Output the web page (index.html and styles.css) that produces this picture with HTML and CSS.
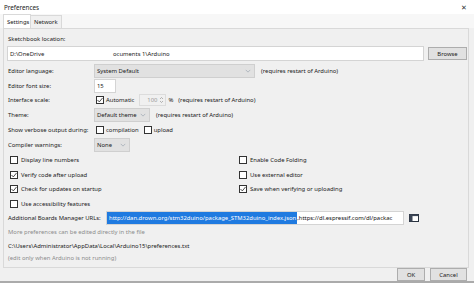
FILE: index.html
```html
<!DOCTYPE html>
<html>
<head>
<meta charset="utf-8">
<link rel="stylesheet" href="styles.css">
</head>
<body>
<div class="win">
  <div class="titlebar"><span class="title">Preferences</span><span class="close">✕</span></div>
  <div class="tabs">
    <div class="tab active">Settings</div>
    <div class="tab">Network</div>
  </div>
  <div class="panel">
    <div class="lbl-row">Sketchbook location:</div>
    <div class="sk-row">
      <div class="field sk"><span class="sk-a">D:\OneDrive</span><span class="sk-b">ocuments 1\Arduino</span></div>
      <div class="btn browse">Browse</div>
    </div>
    <div class="row first">
      <div class="label">Editor language:</div>
      <div class="combo lang"><span>System Default</span><svg class="chev" viewBox="0 0 8 5"><path d="M1 1 L4 4 L7 1" fill="none" stroke="#9aa4b0" stroke-width="0.9"/></svg></div>
      <span class="note">(requires restart of Arduino)</span>
    </div>
    <div class="row">
      <div class="label">Editor font size:</div>
      <div class="field fs">15</div>
    </div>
    <div class="row">
      <div class="label">Interface scale:</div>
      <span class="cb checked"><svg viewBox="0 0 8 8"><path d="M1.5 4 L3.3 5.9 L6.6 1.9" fill="none" stroke="#222" stroke-width="0.8"/></svg></span>
      <span class="cbtext">Automatic</span>
      <div class="spin"><span>100</span><svg class="arr" viewBox="0 0 5 8"><path d="M1 3 L2.5 1.5 L4 3 M1 5 L2.5 6.5 L4 5" fill="none" stroke="#888" stroke-width="0.6"/></svg></div>
      <span class="pct">%</span>
      <span class="note n2">(requires restart of Arduino)</span>
    </div>
    <div class="row">
      <div class="label">Theme:</div>
      <div class="combo theme"><span>Default theme</span><svg class="chev" viewBox="0 0 8 5"><path d="M1 1 L4 4 L7 1" fill="none" stroke="#9aa4b0" stroke-width="0.9"/></svg></div>
      <span class="note">(requires restart of Arduino)</span>
    </div>
    <div class="row">
      <div class="label">Show verbose output during:</div>
      <span class="cb"></span><span class="cbtext">compilation</span>
      <span class="cb c2"></span><span class="cbtext">upload</span>
    </div>
    <div class="row">
      <div class="label">Compiler warnings:</div>
      <div class="combo none"><span>None</span><svg class="chev" viewBox="0 0 8 5"><path d="M1 1 L4 4 L7 1" fill="none" stroke="#9aa4b0" stroke-width="0.9"/></svg></div>
    </div>
    <div class="checks">
      <div class="col">
        <div class="crow"><span class="cb"></span><span class="cbtext">Display line numbers</span></div>
        <div class="crow"><span class="cb checked"><svg viewBox="0 0 8 8"><path d="M1.5 4 L3.3 5.9 L6.6 1.9" fill="none" stroke="#222" stroke-width="0.8"/></svg></span><span class="cbtext">Verify code after upload</span></div>
        <div class="crow"><span class="cb checked"><svg viewBox="0 0 8 8"><path d="M1.5 4 L3.3 5.9 L6.6 1.9" fill="none" stroke="#222" stroke-width="0.8"/></svg></span><span class="cbtext">Check for updates on startup</span></div>
        <div class="crow"><span class="cb"></span><span class="cbtext">Use accessibility features</span></div>
      </div>
      <div class="col right">
        <div class="crow"><span class="cb"></span><span class="cbtext">Enable Code Folding</span></div>
        <div class="crow"><span class="cb"></span><span class="cbtext">Use external editor</span></div>
        <div class="crow"><span class="cb checked"><svg viewBox="0 0 8 8"><path d="M1.5 4 L3.3 5.9 L6.6 1.9" fill="none" stroke="#222" stroke-width="0.8"/></svg></span><span class="cbtext">Save when verifying or uploading</span></div>
      </div>
    </div>
    <div class="url-row">
      <div class="label url-label">Additional Boards Manager URLs:</div>
      <div class="field url"><span class="sel">http://dan.drown.org/stm32duino/package_STM32duino_index.json</span><span class="rest">,https://dl.espressif.com/dl/packac</span></div>
      <div class="winbtn"><svg viewBox="0 0 12 10"><rect x="1.5" y="1.5" width="9" height="7" fill="#fff" stroke="#2a3340" stroke-width="1"/><rect x="1.5" y="1.5" width="3" height="7" fill="#3c4656"/><rect x="1.5" y="1.5" width="9" height="1.6" fill="#3c4656"/></svg></div>
    </div>
    <div class="info grey i1">More preferences can be edited directly in the file</div>
    <div class="info i2">C:\Users\Administrator\AppData\Local\Arduino15\preferences.txt</div>
    <div class="info grey i3">(edit only when Arduino is not running)</div>
  </div>
  <div class="footer">
    <div class="btn ok">OK</div>
    <div class="btn cancel">Cancel</div>
  </div>
  <div class="bottom"></div>
</div>
</body>
</html>
```

FILE: styles.css
```css
html, body {
  margin: 0;
  padding: 0;
}
body {
  width: 474px;
  height: 283px;
  overflow: hidden;
  background: #f0f0f0;
  font-family: "Noto Sans", "Open Sans", sans-serif;
  font-size: 5.9px;
  color: #1a1a1a;
}
.win {
  width: 474px;
  height: 283px;
  display: flex;
  flex-direction: column;
}
.titlebar {
  height: 14px;
  background: #ffffff;
  display: flex;
  align-items: center;
  justify-content: space-between;
  padding: 0 7px 0 4px;
  flex: none;
}
.title {
  font-size: 6.3px;
  color: #222;
}
.close {
  font-size: 6.5px;
  color: #333;
}
.tabs {
  height: 14px;
  flex: none;
  display: flex;
  align-items: flex-end;
  background: #f7f7f7;
  padding-left: 3px;
}
.tab {
  height: 13px;
  line-height: 13px;
  padding: 0 3px;
  background: #f0f0f0;
  border: 1px solid #d9d9d9;
  border-bottom: none;
  margin-right: -1px;
  box-sizing: border-box;
}
.tab.active {
  background: #ffffff;
  height: 14px;
  line-height: 14px;
  position: relative;
  z-index: 1;
  width: 28px;
}
.panel {
  flex: none;
  height: 240px;
  margin: 0 5px 0 3px;
  border: 1px solid #d9d9d9;
  box-sizing: border-box;
  padding: 3px 0 0 3px;
  background: #f0f0f0;
}
.lbl-row {
  height: 14px;
  line-height: 14px;
  padding-left: 1px;
}
.sk-row {
  height: 15px;
  display: flex;
  align-items: center;
}
.field {
  background: #ffffff;
  border: 1px solid #d4d4d4;
  box-sizing: border-box;
  display: flex;
  align-items: center;
  white-space: nowrap;
  overflow: hidden;
}
.sk {
  width: 417px;
  height: 15px;
  padding-left: 2px;
}
.sk-a {
  width: 103px;
  flex: none;
}
.btn {
  background: #e1e1e1;
  border: 1px solid #adadad;
  box-sizing: border-box;
  display: flex;
  align-items: center;
  justify-content: center;
  height: 13px;
}
.browse {
  width: 39px;
  margin-left: 4px;
}
.row {
  height: 14.8px;
  display: flex;
  align-items: center;
  white-space: nowrap;
}
.row.first {
  margin-top: 2.5px;
}
.label {
  width: 87px;
  padding-left: 1px;
  box-sizing: border-box;
  flex: none;
}
.combo {
  height: 14px;
  background: #e1e1e1;
  border: 1px solid #cfcfcf;
  box-sizing: border-box;
  display: flex;
  align-items: center;
  justify-content: space-between;
  padding: 0 3px 0 2px;
}
.chev {
  width: 6px;
  height: 4px;
}
.lang { width: 161px; }
.theme { width: 56px; }
.none { width: 36px; }
.note {
  margin-left: 6px;
}
.fs {
  width: 22px;
  height: 14px;
  padding-left: 2px;
}
.cb {
  width: 8px;
  height: 8px;
  border: 1px solid #333;
  background: #fff;
  box-sizing: border-box;
  display: inline-flex;
  flex: none;
}
.cb svg {
  width: 8px;
  height: 8px;
  margin: -1px;
}
.row .cb {
  margin-left: 2px;
}
.cbtext {
  margin-left: 2px;
}
.row .cb.c2 {
  margin-left: 5px;
}
.spin {
  width: 27px;
  height: 12px;
  margin-left: 5px;
  border: 1px solid #dcdcdc;
  background: #f0f0f0;
  box-sizing: border-box;
  display: flex;
  align-items: center;
  justify-content: flex-end;
  color: #9a9a9a;
  gap: 2px;
  padding-right: 1px;
}
.arr {
  width: 5px;
  height: 8px;
}
.pct {
  margin-left: 2px;
}
.n2 {
  margin-left: 5px;
}
.checks {
  display: flex;
  padding-top: 0.4px;
  height: 58.4px;
}
.col {
  width: 229px;
  flex: none;
  padding-left: 3px;
  box-sizing: border-box;
}
.col.right {
  padding-left: 3px;
}
.crow {
  height: 14.6px;
  display: flex;
  align-items: center;
  white-space: nowrap;
}
.crow .cbtext {
  margin-left: 3px;
}
.url-row {
  height: 14px;
  display: flex;
  align-items: center;
  white-space: nowrap;
}
.url-label {
  width: 99px;
}
.url {
  width: 298px;
  height: 14px;
}
.sel {
  background: #1f7ae0;
  color: #fff;
  height: 12px;
  line-height: 12px;
  padding: 0 1px 0 2px;
  flex: none;
}
.rest {
  color: #111;
}
.winbtn {
  width: 12px;
  height: 11px;
  margin-left: 4px;
  display: flex;
}
.winbtn svg {
  width: 12px;
  height: 10px;
}
.info {
  padding-left: 1px;
  display: flex;
  align-items: center;
}
.grey {
  color: #8c8c8c;
}
.i1 { height: 14px; }
.i2 { height: 13px; }
.i3 { height: 12px; }
.footer {
  flex: none;
  height: 13px;
  display: flex;
  justify-content: flex-end;
  align-items: flex-end;
  padding-right: 7px;
  gap: 5px;
}
.ok { width: 28px; }
.cancel { width: 37px; }
.bottom {
  flex: none;
  height: 2px;
  background: #ababab;
}
```
